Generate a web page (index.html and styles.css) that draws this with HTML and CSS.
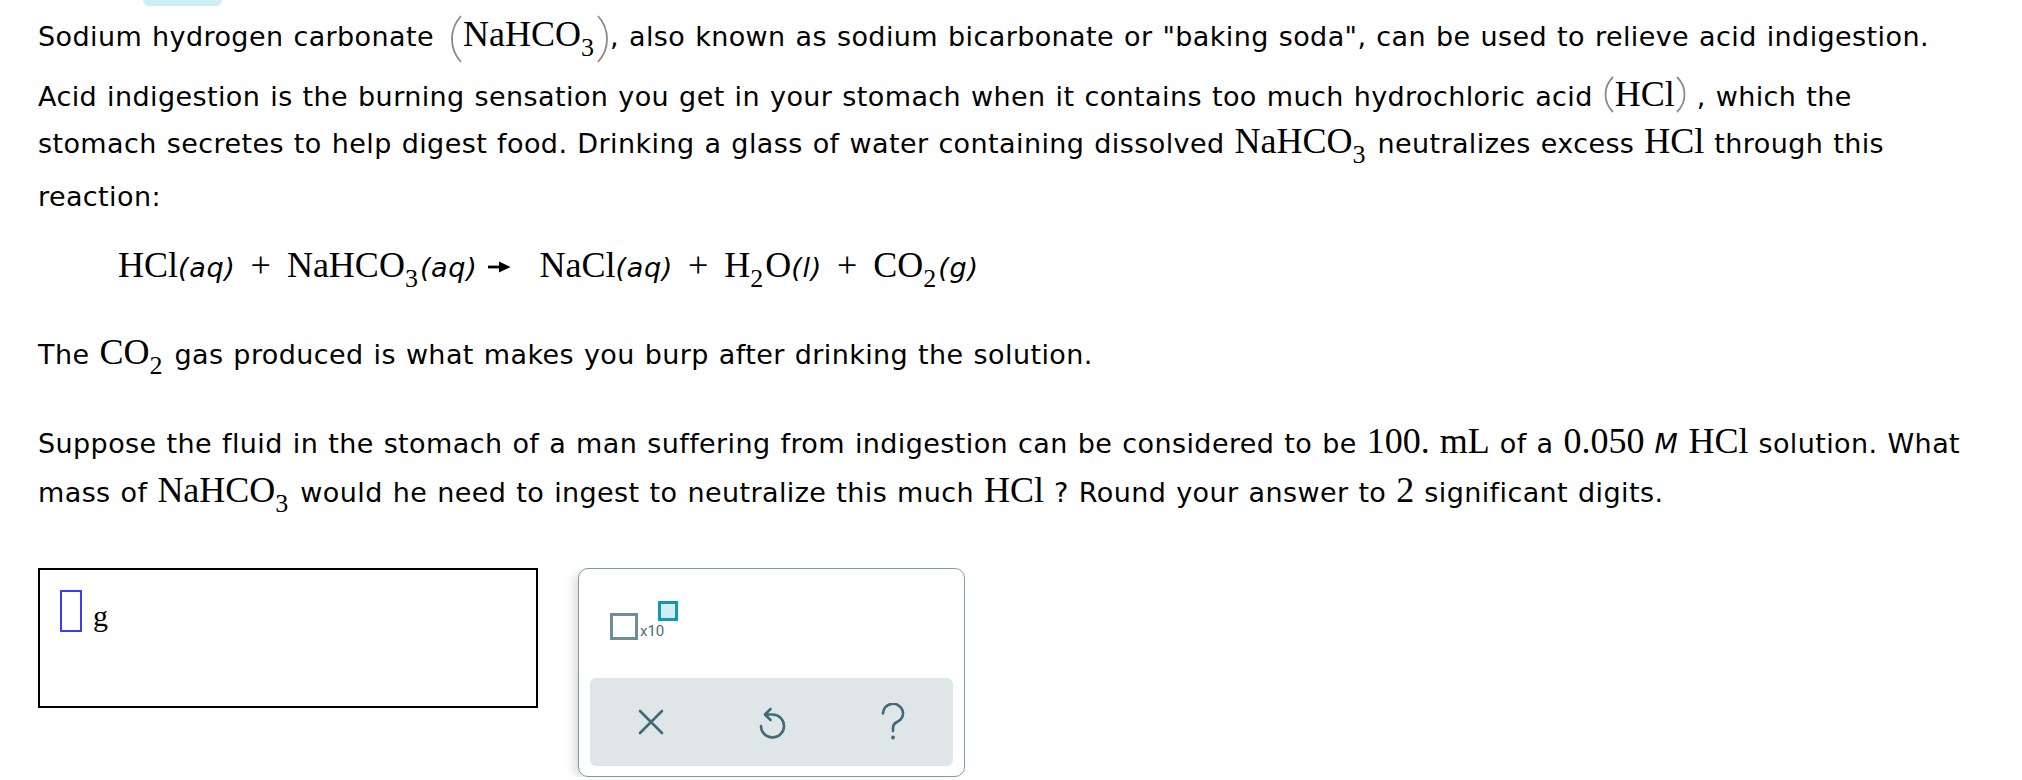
FILE: index.html
```html
<!DOCTYPE html>
<html lang="en">
<head>
<meta charset="utf-8">
<title>Sodium hydrogen carbonate</title>
<link rel="stylesheet" href="styles.css">
</head>
<body>
<div class="tab"></div>
<main class="question">
  <p class="intro">
    <span class="ln">Sodium hydrogen carbonate <svg class="paren big" width="14" height="48" viewBox="0 0 14 48"><path d="M12 1 C0 14 0 34 12 47"/></svg><span class="m">NaHCO<span class="s">3</span></span><svg class="paren big" width="14" height="48" viewBox="0 0 14 48"><path d="M2 1 C14 14 14 34 2 47"/></svg>, also known as sodium bicarbonate or "baking soda", can be used to relieve acid indigestion.</span>
    <span class="ln ln2">Acid indigestion is the burning sensation you get in your stomach when it contains too much hydrochloric acid <svg class="paren small" width="12" height="37" viewBox="0 0 12 37"><path d="M10 1 C0 11 0 26 10 36"/></svg><span class="m">HCl</span><svg class="paren small" width="12" height="37" viewBox="0 0 12 37"><path d="M2 1 C12 11 12 26 2 36"/></svg> , which the</span>
    <span class="ln">stomach secretes to help digest food. Drinking a glass of water containing dissolved <span class="m">NaHCO<span class="s">3</span></span> neutralizes excess <span class="m">HCl</span> through this</span>
    <span class="ln ln4">reaction:</span>
  </p>

  <div class="eq"><span class="m">HCl</span><i class="it">(aq)</i><span class="m op">+</span><span class="m">NaHCO<span class="s">3</span></span><i class="it">(aq)</i><svg class="arrow" width="24" height="14" viewBox="0 0 24 14"><path class="shaft" d="M1 7 H14"/><path class="head" d="M12 1.5 L23.5 7 L12 12.5 Z"/></svg><span class="m">NaCl</span><i class="it">(aq)</i><span class="m op">+</span><span class="m">H<span class="s">2</span>O</span><i class="it">(l)</i><span class="m op">+</span><span class="m">CO<span class="s">2</span></span><i class="it">(g)</i></div>

  <p class="note"><span class="ln">The <span class="m">CO<span class="s">2</span></span> gas produced is what makes you burp after drinking the solution.</span></p>

  <p class="ask">
    <span class="ln">Suppose the fluid in the stomach of a man suffering from indigestion can be considered to be <span class="m">100.</span> <span class="m">mL</span> of a <span class="m">0.050</span> <i class="it">M</i> <span class="m">HCl</span> solution. What</span>
    <span class="ln">mass of <span class="m">NaHCO<span class="s">3</span></span> would he need to ingest to neutralize this much <span class="m">HCl</span> ? Round your answer to <span class="m">2</span> significant digits.</span>
  </p>

  <div class="work">
    <div class="answer">
      <span class="slot"></span><span class="unit">g</span>
    </div>
    <div class="tools">
      <div class="sci">
        <span class="mant"></span><span class="x10">x10</span><span class="exp"></span>
      </div>
      <div class="actions">
        <button class="act" type="button" aria-label="Clear">
          <svg width="26" height="26" viewBox="0 0 26 26"><path d="M2 2 L24 24 M24 2 L2 24"/></svg>
        </button>
        <button class="act" type="button" aria-label="Undo">
          <svg width="28" height="34" viewBox="0 0 28 34"><path d="M3 21 A11.5 11.5 0 1 0 14.5 9.5 H8"/><path d="M12.5 4 L7 9.5 L12.5 15"/></svg>
        </button>
        <button class="act" type="button" aria-label="Help">
          <svg width="26" height="38" viewBox="0 0 26 38"><path d="M3 10.5 A10 9.5 0 1 1 17 19 C14 20.5 13 22 13 25 V28"/><circle class="dot" cx="13" cy="34.5" r="1.9"/></svg>
        </button>
      </div>
    </div>
  </div>
</main>
</body>
</html>
```

FILE: styles.css
```css
* {
  box-sizing: border-box;
}

html,
body {
  margin: 0;
  background: #ffffff;
}

body {
  font-family: "DejaVu Sans", Verdana, sans-serif;
  font-size: 27px;
  color: #000000;
}

.tab {
  width: 79px;
  height: 6px;
  margin-left: 143px;
  background: #cdeef2;
  border-radius: 0 0 10px 10px;
}

.question {
  padding: 7px 0 0 38px;
}

p {
  margin: 0;
}

.ln {
  display: block;
  line-height: 47px;
  white-space: nowrap;
  letter-spacing: 0.4px;
  word-spacing: 1px;
}

.ln2 {
  margin-top: 10px;
}

.ln4 {
  margin-top: 6px;
}

.m {
  font-family: "Liberation Serif", "Times New Roman", serif;
  font-size: 36px;
  line-height: 1;
  letter-spacing: 0;
  word-spacing: 0;
}

.s {
  padding-right: 2px;
  font-size: 26px;
  line-height: 0;
  vertical-align: -10px;
}

.it {
  font-family: "DejaVu Sans", Verdana, sans-serif;
  font-size: 27px;
  font-style: italic;
  letter-spacing: 0.7px;
}

.paren path {
  fill: none;
  stroke: #8a8a8a;
  stroke-width: 1.8;
}

.paren.big {
  vertical-align: -17px;
}

.paren.big:first-of-type {
  margin-left: 5px;
}

.paren.small {
  vertical-align: -7px;
}

.eq {
  margin: 24px 0 0 80px;
  line-height: 47px;
  white-space: nowrap;
}

.op {
  margin: 0 16px 0 15px;
}

.arrow {
  margin: 0 28px 0 10px;
  vertical-align: 3px;
}

.arrow .shaft {
  stroke: #000;
  stroke-width: 2.8;
}

.arrow .head {
  fill: #000;
}

.note {
  margin-top: 40px;
}

.ask {
  margin-top: 41px;
}

.ask .ln {
  line-height: 49px;
}

.work {
  display: flex;
  align-items: flex-start;
  gap: 40px;
  margin-top: 51px;
}

.answer {
  display: flex;
  align-items: flex-start;
  width: 500px;
  height: 140px;
  padding: 20px;
  border: 2px solid #000000;
}

.slot {
  width: 22px;
  height: 42px;
  border: 2px solid #3b3bfa;
}

.unit {
  margin: 11px 0 0 11px;
  font-family: "Liberation Serif", "Times New Roman", serif;
  font-size: 30px;
  line-height: 30px;
}

.tools {
  display: flex;
  flex-direction: column;
  width: 387px;
  height: 209px;
  padding: 0 11px 10px;
  border: 1px solid #7f9ca4;
  border-radius: 10px;
  background: #ffffff;
  box-shadow: -7px 3px 10px -3px rgba(0, 0, 0, 0.14);
}

.sci {
  display: flex;
  align-items: flex-end;
  height: 39px;
  margin: 32px 0 0 20px;
}

.mant {
  width: 28px;
  height: 27px;
  border: 3px solid #6f8f98;
}

.x10 {
  margin: 0 0 1px 2px;
  font-family: Roboto, "DejaVu Sans", sans-serif;
  font-size: 15px;
  line-height: 15px;
  color: #4a6e78;
}

.exp {
  align-self: flex-start;
  width: 20px;
  height: 20px;
  margin-left: -6px;
  border: 3px solid #1597b3;
  background: #cdeef2;
}

.actions {
  display: grid;
  grid-template-columns: repeat(3, 1fr);
  align-items: center;
  justify-items: center;
  height: 88px;
  margin-top: auto;
  background: #dfe6e8;
  border-radius: 6px;
}

.act {
  display: flex;
  align-items: center;
  justify-content: center;
  padding: 0;
  border: 0;
  background: transparent;
}

.act path {
  fill: none;
  stroke: #3f6b78;
  stroke-width: 2.6;
  stroke-linecap: round;
  stroke-linejoin: round;
}

.act .dot {
  fill: #3f6b78;
}
```
